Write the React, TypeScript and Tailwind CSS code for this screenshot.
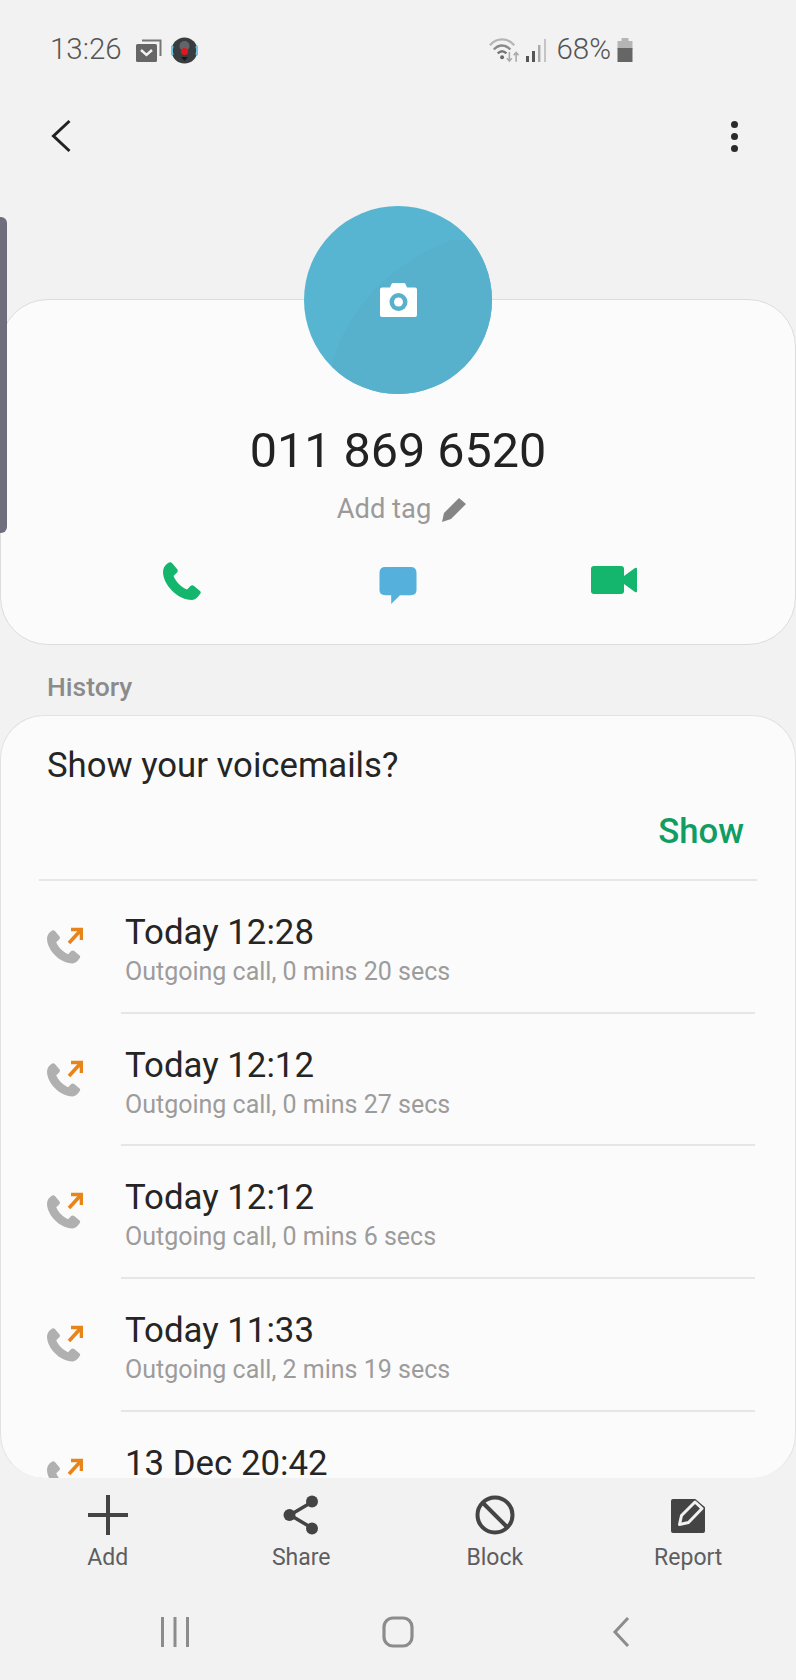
const PHONE = "M5 1C2 3 0 6 0 10C0 22 14 38 29 38C32 38 35 35 37 32C38 31 38 30 37 29L31 24C30 23 28.5 23 27.5 24L24 27.5C18 25 13 20 10.5 14L14 10.5C15 9.5 15 8 14 7L9 1C8 0 6.5 0 5 1Z";

const calls = [
  { time: "Today 12:28", detail: "Outgoing call, 0 mins 20 secs" },
  { time: "Today 12:12", detail: "Outgoing call, 0 mins 27 secs" },
  { time: "Today 12:12", detail: "Outgoing call, 0 mins 6 secs" },
  { time: "Today 11:33", detail: "Outgoing call, 2 mins 19 secs" },
  { time: "13 Dec 20:42", detail: "" },
];

function CallIcon() {
  return (
    <svg width="38" height="40" viewBox="0 0 38 40" className="shrink-0">
      <g transform="translate(2 3) scale(0.88)">
        <path d={PHONE} fill="#b0b0b0" />
      </g>
      <path d="M24 16 L35 4 M26 2.5 H36.5 V13" fill="none" stroke="#e8851a" strokeWidth="3.6" />
    </svg>
  );
}

function StatusBar() {
  return (
    <div className="h-[104px] shrink-0 pl-[50px] pr-[163px] pt-[30px] flex items-start justify-between">
      <div className="flex items-center gap-[14px] h-[40px]">
        <span className="text-[29.5px] font-light text-[#555] leading-none">13:26</span>
        <div className="flex items-center gap-[9px]">
          <svg width="26" height="24" viewBox="0 0 26 24">
            <path d="M6 2.5 H24.5 V18" fill="none" stroke="#777" strokeWidth="2" />
            <rect x="0" y="6" width="21" height="18" rx="1.5" fill="#666" />
            <path d="M5 12 L10.5 17 L16 12" fill="none" stroke="#f2f2f2" strokeWidth="2.4" />
          </svg>
          <svg width="27" height="27" viewBox="0 0 27 27">
            <circle cx="13.5" cy="13.5" r="13" fill="#3a3d40" />
            <path d="M1.5 9 A13 13 0 0 0 1.5 18 M25.5 9 A13 13 0 0 1 25.5 18" fill="none" stroke="#6ec6e0" strokeWidth="2.5" />
            <circle cx="13.5" cy="9" r="5" fill="#62666a" />
            <circle cx="13.5" cy="14.5" r="3.5" fill="#e0181e" />
            <path d="M10 20 H17 L13.5 24Z" fill="#16181a" />
          </svg>
        </div>
      </div>
      <div className="flex items-center h-[40px]">
        <svg width="31" height="26" viewBox="0 0 32 26">
          <path d="M1 8 C8 0 19 0 26 8" fill="none" stroke="#b5b5b5" strokeWidth="2.4" />
          <path d="M5 12.5 C10 7 17 7 22 12.5" fill="none" stroke="#8a8a8a" strokeWidth="2.4" />
          <path d="M9 16.5 C12 13.5 15 13.5 18 16.5" fill="none" stroke="#777" strokeWidth="2.4" />
          <circle cx="13.5" cy="20.5" r="2" fill="#666" />
          <path d="M21 15 V24 M18.5 21.5 L21 24.5 L23.5 21.5" fill="none" stroke="#aaa" strokeWidth="1.6" />
          <path d="M28 25 V16 M25.5 18.5 L28 15.5 L30.5 18.5" fill="none" stroke="#aaa" strokeWidth="1.6" />
        </svg>
        <svg width="22" height="24" viewBox="0 0 22 24" className="ml-[5px]">
          <rect x="1" y="18" width="3" height="6" fill="#555" />
          <rect x="7" y="13" width="3" height="11" fill="#555" />
          <rect x="13" y="7" width="2.4" height="17" fill="#aaa" />
          <rect x="19" y="1" width="2" height="23" fill="#c4c4c4" />
        </svg>
        <span className="ml-[9px] text-[29.5px] font-light text-[#555] leading-none">68%</span>
        <svg width="16" height="24" viewBox="0 0 16 24" className="ml-[6px]">
          <rect x="4.5" y="0" width="7" height="3" fill="#b5b5b5" />
          <rect x="0.5" y="3" width="15" height="8" fill="#b5b5b5" />
          <rect x="0.5" y="10" width="15" height="14" fill="#666" />
        </svg>
      </div>
    </div>
  );
}

function AppBar() {
  return (
    <div className="h-[64px] shrink-0 pl-[50px] pr-[58px] flex items-center justify-between">
      <svg width="22" height="34" viewBox="0 0 22 34">
        <path d="M19.5 2 L3.5 17 L19.5 32" fill="none" stroke="#222" strokeWidth="3" />
      </svg>
      <div className="flex flex-col gap-[5px]">
        <span className="block w-[7px] h-[7px] rounded-full bg-[#2a2a2a]" />
        <span className="block w-[7px] h-[7px] rounded-full bg-[#2a2a2a]" />
        <span className="block w-[7px] h-[7px] rounded-full bg-[#2a2a2a]" />
      </div>
    </div>
  );
}

function Avatar() {
  return (
    <div className="relative z-10 mx-auto mt-[38px] -mb-[95px] w-[188px] h-[188px] rounded-full overflow-hidden bg-[#58b5d1] flex items-center justify-center">
      <svg width="188" height="188" viewBox="0 0 188 188" className="absolute inset-0">
        <path d="M28 188 V157 C45 100 90 55 148 34 H188 V188Z" fill="#57b0cc" />
      </svg>
      <svg width="37" height="34" viewBox="0 0 37 34" className="relative">
        <path d="M2 4.5 H10 L11.5 1 Q12 0 13 0 H24 Q25 0 25.5 1 L27 4.5 H35 Q37 4.5 37 6.5 V32 Q37 34 35 34 H2 Q0 34 0 32 V6.5 Q0 4.5 2 4.5Z" fill="#fff" />
        <circle cx="18.5" cy="19" r="9" fill="#58b0cd" />
        <circle cx="18.5" cy="19" r="4.5" fill="#fff" />
      </svg>
    </div>
  );
}

function ContactCard() {
  return (
    <div className="h-[346px] shrink-0 rounded-[48px] bg-[#fbfbfb] border border-[#dcdcdc] pt-[123px] flex flex-col items-center">
      <div className="text-[48.5px] leading-[56px] text-[#222]">011 869 6520</div>
      <div className="mt-[13px] pl-[7px] flex items-center gap-[11px] h-[36px]">
        <span className="text-[27.3px] leading-none text-[#9a9a9a]">Add tag</span>
        <svg width="24" height="24" viewBox="0 0 24 24">
          <path d="M17 0 L24 6 L9 21 L0 24 L2 15Z" fill="#858585" />
        </svg>
      </div>
      <div className="mt-[34px] w-full pl-[162px] pr-[158px] flex items-start justify-between">
        <svg width="38" height="38" viewBox="0 0 38 38">
          <path d={PHONE} fill="#14b56c" />
        </svg>
        <svg width="38" height="37" viewBox="0 0 38 38" className="mt-[5px] ml-[4px]">
          <path d="M6 0 H32 Q38 0 38 6 V24 Q38 29 32 29 H21 L12 38 V29 H6 Q0 29 0 24 V6 Q0 0 6 0Z" fill="#55b0db" />
        </svg>
        <svg width="46" height="28" viewBox="0 0 46 28" className="mt-[4px]">
          <path d="M3 0 H30 Q33 0 33 3 V25 Q33 28 30 28 H3 Q0 28 0 25 V3 Q0 0 3 0Z" fill="#14b56c" />
          <path d="M33 10 L44 2 Q46 1 46 3 V25 Q46 27 44 26 L33 18Z" fill="#14b56c" />
        </svg>
      </div>
    </div>
  );
}

function HistoryCard() {
  return (
    <div className="h-[763px] shrink-0 rounded-[44px] bg-[#fbfbfb] border border-[#e2e2e2] border-b-0 overflow-hidden flex flex-col">
      <div className="px-[46px] pt-[27px] h-[163px] shrink-0 flex flex-col">
        <div className="text-[34.7px] leading-[44px] text-[#252525]">Show your voicemails?</div>
        <div className="mt-[22px] text-right text-[34.7px] leading-[44px] font-medium text-[#0f9d63] pr-[5px]">Show</div>
      </div>
      <div className="mx-[38px] h-[2px] shrink-0 bg-[#e6e6e6]" />
      {calls.map((c, i) => (
        <div key={i} className="h-[132.7px] shrink-0 pl-[44px] pr-[40px] flex">
          <div className="mt-[46px]"><CallIcon /></div>
          <div className="ml-[42px] flex-1 flex flex-col">
            <div className="pt-[31px] text-[34.8px] leading-[40px] text-[#252525]">{c.time}</div>
            {c.detail && <div className="text-[25px] leading-[36px] mt-[2px] text-[#9c9c9c]">{c.detail}</div>}
            {c.detail && <div className="mt-auto h-[2px] -ml-[4px] bg-[#e6e6e6]" />}
          </div>
        </div>
      ))}
    </div>
  );
}

function Toolbar() {
  const ink = "#444";
  const items = [
    { label: "Add", icon: (
      <svg width="40" height="40" viewBox="0 0 40 40"><path d="M0 20 H40 M20 0 V40" stroke={ink} strokeWidth="4" /></svg>
    ) },
    { label: "Share", icon: (
      <svg width="36" height="40" viewBox="0 0 36 40">
        <path d="M29 7 L7 20 L29 33" fill="none" stroke={ink} strokeWidth="3.5" />
        <circle cx="29" cy="6.5" r="6" fill={ink} /><circle cx="6.5" cy="20" r="6" fill={ink} /><circle cx="29" cy="33.5" r="6" fill={ink} />
      </svg>
    ) },
    { label: "Block", icon: (
      <svg width="40" height="40" viewBox="0 0 40 40">
        <circle cx="20" cy="20" r="17.5" fill="none" stroke={ink} strokeWidth="4" /><path d="M8 8 L32 32" stroke={ink} strokeWidth="4" />
      </svg>
    ) },
    { label: "Report", icon: (
      <svg width="34" height="36" viewBox="0 -2 34 36">
        <path d="M2 0 H32 Q34 0 34 2 V32 Q34 34 32 34 H2 Q0 34 0 32 V2 Q0 0 2 0Z" fill={ink} />
        <path d="M22 -2 H36 V10 Z" fill="#f2f2f2" />
        <path d="M8.5 25.5 L10.5 16.5 L24 3 L31 9.5 L17.5 23.5Z" fill={ink} stroke="#f2f2f2" strokeWidth="3" strokeLinejoin="round" />
      </svg>
    ) },
  ];
  return (
    <div className="h-[106px] shrink-0 px-[11px] grid grid-cols-4">
      {items.map((it) => (
        <div key={it.label} className="flex flex-col items-center">
          <div className="h-[66px] flex items-center pt-[8px]">{it.icon}</div>
          <div className="text-[23px] leading-[28px] text-[#5e5e5e]">{it.label}</div>
        </div>
      ))}
    </div>
  );
}

function NavBar() {
  return (
    <div className="flex-1 pl-[161px] pr-[166px] flex items-center justify-between">
      <svg width="28" height="30" viewBox="0 0 28 30">
        <path d="M1.5 0 V30 M14 0 V30 M26.5 0 V30" stroke="#8c8c8c" strokeWidth="3" />
      </svg>
      <svg width="32" height="32" viewBox="0 0 32 32" className="-ml-[6px]">
        <rect x="2" y="2" width="28" height="28" rx="9" fill="none" stroke="#8c8c8c" strokeWidth="3.2" />
      </svg>
      <svg width="18" height="30" viewBox="0 0 18 30">
        <path d="M16 1 L3 15 L16 29" fill="none" stroke="#8c8c8c" strokeWidth="3" />
      </svg>
    </div>
  );
}

export default function App() {
  return (
    <div className="relative w-[796px] h-[1680px] overflow-hidden bg-[#f2f2f2] flex flex-col font-['Roboto',sans-serif]">
      <StatusBar />
      <AppBar />
      <Avatar />
      <ContactCard />
      <div className="h-[70px] shrink-0 pl-[47px] pt-[24px] text-[26.5px] leading-[36px] font-medium text-[#8b8b8b]">History</div>
      <HistoryCard />
      <Toolbar />
      <NavBar />
      <div className="absolute left-0 top-[217px] w-[7px] h-[316px] rounded-r-[6px] bg-[#6f6e7d] z-20" />
    </div>
  );
}
